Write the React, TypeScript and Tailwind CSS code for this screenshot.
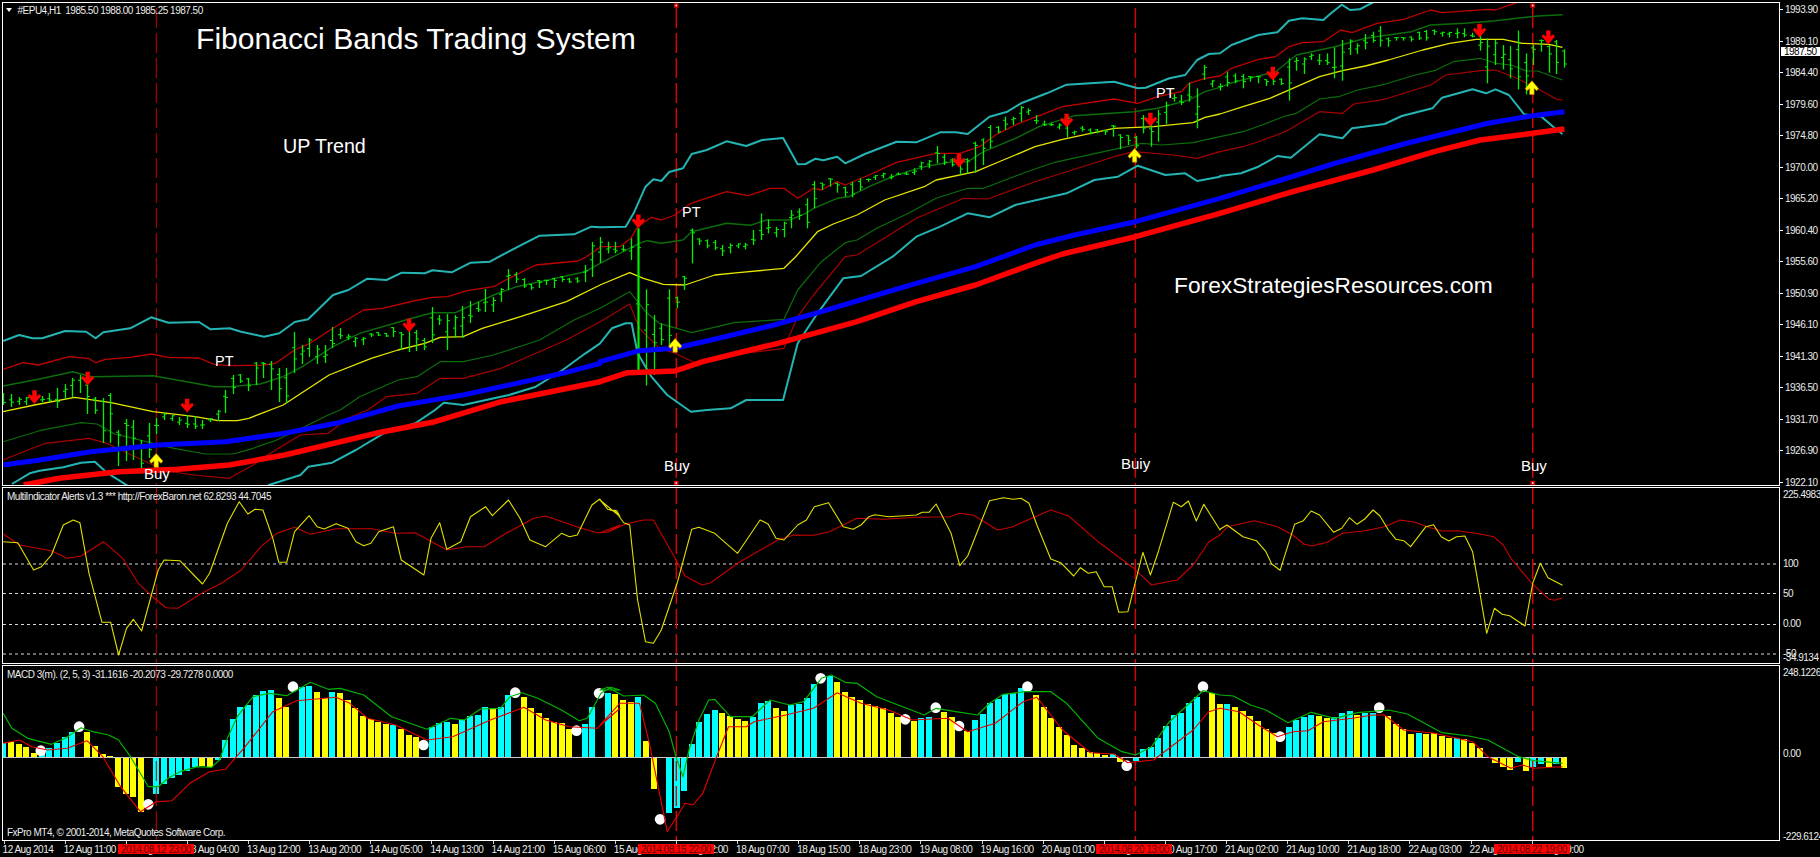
import React from "react";

// chart data was read off the screenshot in crops: each crop has its own scale
type Pt = [number, number];
type Map = (x: number, y: number) => Pt;

const t1: Map = (x, y) => [x / 2.613, y / 3];
const t2: Map = (x, y) => [600 + x / 2.529, y / 3];
const t3: Map = (x, y) => [1220 + x / 2.613, y / 3];
const b1: Map = (x, y) => [x / 2.529, 410 + y / 3];
const b2: Map = (x, y) => [600 + x / 2.529, 410 + y / 3];
const b3: Map = (x, y) => [1220 + x / 2.613, 410 + y / 3];

const pts = (s: string, m: Map) =>
  s.split(" ").map((p) => {
    const [x, y] = p.split(",").map(Number);
    return m(x, y);
  });
const line = (...parts: Pt[][]) =>
  parts
    .flat()
    .map(([x, y]) => `${x.toFixed(1)},${y.toFixed(1)}`)
    .join(" ");

const upperCyan = line(
  pts("8,1023 50,1005 85,1015 110,1015 170,993 225,995 250,1015 270,997 340,985 395,952 440,968 520,966 550,988 600,985 630,995 690,1010 730,1000 770,966 805,958 870,885 910,870 960,836 1010,840 1050,818 1110,820 1130,811 1180,817 1230,788 1280,785 1320,760 1410,707 1500,703 1545,680 1568,682", t1),
  pts("0,682 65,680 85,640 115,560 135,538 155,543 175,516 210,505 232,462 270,450 320,424 370,438 410,420 463,414 500,493 520,492 545,476 565,481 600,470 620,490 670,462 750,425 800,427 860,397 900,397 930,402 985,350 1030,335 1065,310 1130,280 1180,254 1300,245 1360,265 1380,263 1440,235 1480,225 1510,180 1540,162 1568,160", t2),
  pts("0,160 30,135 100,105 150,97 180,62 215,55 270,60 290,40 318,14 340,30 365,28 395,10 430,-10 900,-20", t3),
);
const upperRed = line(
  pts("8,1108 60,1088 100,1095 180,1070 230,1075 250,1088 275,1078 340,1072 395,1062 440,1072 520,1074 560,1093 600,1097 680,1096 720,1090 770,1050 810,1030 870,985 950,930 1000,925 1080,903 1130,892 1170,890 1220,872 1290,860 1330,835 1400,795 1510,783 1530,772 1568,742", t1),
  pts("0,740 50,740 78,715 95,680 130,652 155,660 190,645 230,610 320,575 375,587 430,565 465,565 500,595 540,565 560,570 600,545 620,555 680,525 750,487 850,460 910,460 960,440 1000,405 1060,370 1170,320 1300,297 1360,310 1410,290 1470,275 1490,250 1530,235 1568,228", t2),
  pts("0,228 30,205 100,178 145,170 180,140 215,128 270,125 315,90 345,98 410,70 480,58 550,30 580,38 700,28 720,30 770,10 800,-5 900,-15", t3),
);
const upperGreen = line(
  pts("8,1158 100,1138 190,1115 240,1130 400,1127 560,1160 600,1160 680,1152 740,1130 790,1100 870,1040 940,1000 1060,960 1130,938 1190,938 1290,885 1350,860 1530,815 1568,790", t1),
  pts("0,790 50,760 100,730 120,722 155,730 210,720 232,695 320,670 380,676 420,660 480,660 520,640 540,625 600,595 630,590 680,560 750,525 820,500 890,485 930,485 970,455 1060,410 1110,380 1200,347 1350,335 1410,325 1490,300 1530,275 1568,262", t2),
  pts("0,262 40,245 100,228 145,215 200,165 300,140 380,115 500,95 550,75 640,70 720,62 830,48 895,44", t3),
);
const midYellow = line(
  pts("8,1235 90,1215 195,1192 290,1208 400,1235 510,1250 570,1262 620,1262 650,1255 740,1215 860,1125 970,1075 1040,1050 1110,1030 1150,1012 1210,1010 1260,985 1360,950 1480,905 1568,855", t1),
  pts("0,855 75,818 110,835 160,853 215,855 290,825 350,818 465,805 495,770 550,695 590,672 650,645 720,600 820,560 850,540 950,515 1020,480 1100,440 1170,418 1300,385 1400,380 1500,368 1530,352 1568,342", t2),
  pts("0,342 60,320 130,295 190,265 260,230 320,212 380,198 440,180 530,150 600,130 670,118 740,118 790,130 860,133 895,142", t3),
);
const lowerGreen = line(
  pts("8,95 100,62 205,38 245,42 290,72 360,92 440,115 520,132 590,132 640,115 700,90 770,50 830,15 860,0", b1),
  pts("940,1190 1040,1140 1090,1130 1150,1085 1210,1085 1290,1065 1410,1020 1500,960 1568,925", t1),
  pts("0,925 75,875 115,935 150,970 232,998 340,968 465,958 500,870 560,785 620,728 650,720 700,685 780,640 850,595 930,565 970,565 1080,515 1150,487 1300,448 1370,430 1420,435 1500,428 1568,410", t2),
  pts("0,410 60,395 110,375 170,348 200,340 260,297 310,290 360,270 430,253 510,225 560,212 610,185 680,175 720,190 760,195 800,213 830,213 895,240", t3),
);
const lowerRed = line(
  pts("8,150 60,125 115,100 225,85 270,100 350,145 420,183 490,195 580,205 640,165 690,125 760,75 830,70 880,25 930,0", b1),
  pts("1010,1190 1090,1180 1150,1135 1210,1135 1310,1105 1480,1020 1568,965", t1),
  pts("0,965 75,912 100,985 150,1045 190,1060 240,1088 300,1070 400,1055 465,1045 500,950 540,885 620,770 650,765 800,655 920,595 980,597 1100,545 1300,470 1350,455 1450,465 1510,475 1568,455", t2),
  pts("0,455 60,440 100,425 170,395 260,335 320,340 350,312 430,298 550,255 590,225 680,212 720,210 770,232 820,260 880,298 895,300", t3),
);
const lowerCyan = line(
  pts("30,222 75,190 100,182 160,172 205,158 240,155 270,188 340,240 680,240 680,225 760,195 780,170 840,158 900,120 970,70 1050,40 1100,0", b1),
  pts("1160,1208 1210,1215 1330,1185 1400,1160 1470,1110 1530,1060 1568,1030", t1),
  pts("0,1030 30,985 65,970 80,970 95,1060 130,1130 170,1185 230,1235 270,1230 330,1225 370,1200 463,1200 500,1030 550,940 615,835 660,828 740,770 800,710 860,680 930,640 985,652 1050,615 1180,580 1250,540 1310,530 1360,497 1430,525 1480,520 1510,543 1568,530", t2),
  pts("0,528 55,520 100,500 150,468 185,473 260,403 320,415 345,385 430,372 475,348 555,325 580,293 660,268 695,280 720,268 755,285 795,343 840,350 875,385 895,402", t3),
);
const blueMa = line(
  pts("8,165 100,150 230,125 400,105 570,95 720,70 850,40", b1),
  pts("1040,1218 1210,1185 1470,1120 1568,1090", t1),
  pts("0,1085 100,1052 190,1045 300,1015 440,975 560,935 700,885 800,850 950,800 1100,735 1200,705 1354,665 1568,595", t2),
  pts("0,595 160,540 300,490 480,432 700,370 817,347 900,335", t3),
);
const redMa = line(
  pts("60,225 150,205 300,185 450,178 580,165 720,135 950,70 1100,35", b1),
  pts("1310,1205 1568,1145", t1),
  pts("0,1145 70,1118 190,1113 260,1085 450,1030 650,965 800,905 950,855 1100,790 1170,762 1354,710 1568,640", t2),
  pts("0,640 190,575 400,510 560,455 680,420 817,400 900,387", t3),
);

const oscYellow = line(
  pts("8,395 45,398 85,480 105,470 130,435 160,345 185,330 202,338 225,490 258,637 280,637 300,735 320,655 337,628 358,663 400,480 415,450 455,452 512,522 530,490 575,340 605,275 627,312 645,298 665,300 690,385 705,457 725,457 745,365 782,317 802,350 820,357 850,341 880,355 900,395 920,407 938,400 958,365 995,350 1015,450 1072,495 1090,385 1112,338 1130,418 1165,395 1190,320 1228,290 1245,317 1286,270 1315,325 1340,390 1380,410 1420,370 1440,380 1460,375 1497,285 1517,267 1537,298 1560,302 1568,320", b1),
  pts("0,270 20,298 40,305 60,338 75,345 95,570 115,695 135,700 155,660 195,520 232,358 250,352 290,370 348,430 405,330 425,342 445,385 465,390 500,345 522,330 542,290 578,278 615,350 640,358 660,345 680,320 695,314 730,320 800,315 815,307 832,307 850,282 888,370 910,467 930,438 985,272 1020,263 1045,268 1065,265 1085,280 1105,345 1140,447 1165,458 1198,498 1215,473 1235,490 1255,485 1275,530 1295,530 1312,607 1335,605 1373,427 1392,495 1412,425 1450,277 1470,290 1488,273 1508,333 1527,283 1568,360", b2),
  pts("0,358 18,345 60,380 95,392 120,425 135,462 157,481 195,343 218,332 238,303 260,315 297,367 318,355 338,323 358,343 378,327 400,300 418,318 440,360 460,388 480,392 498,410 538,350 558,344 578,380 598,393 618,380 640,378 660,425 680,555 697,670 717,595 737,613 757,617 797,648 817,520 837,460 857,503 895,526", b3),
);
const oscRed = line(
  pts("8,372 50,405 130,422 170,445 205,438 262,395 310,445 350,520 390,565 420,593 450,595 510,550 560,520 610,480 660,410 700,370 745,352 785,373 850,356 940,356 1000,370 1050,368 1130,420 1180,410 1225,410 1280,370 1350,325 1380,318 1470,355 1510,368 1535,367 1568,345", b1),
  pts("0,368 20,366 65,342 110,330 135,330 190,445 215,498 258,525 280,518 350,458 450,390 490,375 540,376 580,365 650,325 720,328 800,322 885,320 910,310 945,316 1005,360 1040,352 1140,300 1185,318 1260,395 1350,475 1395,525 1430,517 1460,510 1500,465 1540,395 1568,375", b2),
  pts("0,375 20,350 90,332 150,350 190,375 220,403 240,408 280,397 320,370 380,362 430,350 470,330 510,337 545,352 580,363 620,362 680,372 715,380 740,405 760,445 815,520 860,568 875,571 895,563", b3),
);

const macdGreen = line(
  pts("8,910 30,955 70,985 130,1003 165,985 205,953 235,965 275,975 300,990 330,1040 355,1090 375,1130 400,1130 425,1105 455,1085 500,1070 535,1072 555,1050 575,985 600,920 640,860 680,850 725,857 785,817 830,838 860,835 920,855 990,920 1080,958 1140,925 1175,930 1215,897 1265,895 1290,860 1320,848 1360,865 1420,900 1465,932 1485,925 1520,850 1545,832 1568,840", b1),
  pts("0,840 20,832 60,858 110,855 140,880 175,965 192,1040 210,1100 225,1020 250,930 275,870 290,868 330,920 385,920 430,870 480,885 515,875 560,805 585,795 620,817 650,820 700,860 820,915 850,895 900,905 955,915 985,880 1020,853 1075,845 1140,845 1180,880 1260,985 1320,1025 1354,1035 1395,1010 1440,935 1500,870 1525,842 1568,855", b2),
  pts("0,855 35,858 80,885 120,900 178,938 238,907 300,925 360,908 440,900 490,912 580,968 650,978 700,990 780,1040 820,1052 895,1060", b3),
);
const macdRed = line(
  pts("8,1000 50,990 80,1010 120,1020 170,1015 220,992 260,1040 305,1130 355,1205 395,1175 435,1172 480,1120 530,1085 570,1078 620,1010 690,905 750,872 850,862 885,880 930,925 1000,945 1080,990 1145,980 1240,930 1325,892 1380,930 1440,950 1510,955 1568,895", b1),
  pts("0,945 50,880 100,880 125,1000 170,1265 200,1210 215,1180 235,1185 260,1150 295,1040 325,950 370,950 390,935 470,915 540,895 600,848 660,880 730,900 790,930 880,925 930,965 1000,940 1070,875 1105,862 1170,960 1240,1028 1300,1032 1335,1058 1400,1050 1500,960 1540,905 1568,895", b2),
  pts("0,895 50,905 100,945 150,980 190,965 230,962 270,935 345,925 400,915 430,915 480,960 560,970 660,995 700,1040 760,1075 790,1065 820,1075 895,1070", b3),
);

// high/low of each candle bar, in page pixels up to bar 78, then crop units
const barsA = "393,405 394,407 397,405 397,405 391,403 396,402 393,402 388,408 384,399 378,397 375,393 378,414 397,414 398,443 393,443 430,466 419,461 420,460 440,471 423,458 418,434 413,420 415,421 417,425 415,428 416,429 420,429 418,422 410,421 390,413 375,394 374,383 378,391 362,385 362,378 361,390 368,402 368,403 332,373 345,364 338,357 345,364 345,363 327,348 328,339 334,340 337,347 337,345 333,337 332,336 333,337 327,337 332,350 320,352 330,351 338,350 307,343 315,325 314,350 315,338 306,338 301,323 302,312 289,312 297,312 288,302 269,290 272,283 278,288 284,290 280,288 280,285 278,288 276,282 278,283 277,283 265,282 242,277 237,263";
const barsB = "725,760 725,760 735,755 715,780 685,1125 868,1157 945,1125 970,1035 868,1050 890,925 828,870 685,790 715,735 718,745 720,750 735,768 730,760 730,745 728,748 690,735 640,720 658,700 680,712 665,712 630,685 625,660 595,685 543,625 548,570 535,560 548,578 560,590 545,592 535,572 535,545 525,540 518,535 522,538 517,525 515,525 505,525 485,510 480,505 438,490 462,495 475,500 490,525 475,520 425,518 415,495 375,445 378,400 350,390 350,375 318,365 325,345 345,372 362,378 368,378 370,388 350,412 392,405 378,395 385,403 387,400 390,405 375,410 403,448 405,435 408,445 345,400 365,440 330,425 305,372 282,305 285,315 248,305 265,385 195,240 240,262 250,272 215,260 220,250 222,265 228,245 228,250 238,258 220,255 235,255 175,302 172,212 172,222 160,180 162,195 160,195 142,235 120,242 118,165 130,162 102,148 95,128 78,140 112,140 112,122 112,122 110,125 95,120 90,122 88,105 95,110 95,112 85,115 85,112 98,112 105,152 115,250 120,195 135,208 138,235 92,268 160,283 135,195 118,155 135,218 120,222 148,203";

const parsePairs = (s: string, k: number) => s.split(" ").map((p) => p.split(",").map((n) => Number(n) / k));
const bars = [...parsePairs(barsA, 1), ...parsePairs(barsB, 3)];
const barX = (i: number) => 3.3 + 7.65 * i;

const histogram = "c1000 y997 y1002 y1010 y1030 c1020 c1014 c1000 c982 c965 - y965 y1008 y1033 y1037 y1130 y1152 y1160 y1205 - c1152 c1122 c1105 c1095 c1083 c1070 y1068 y1072 c1050 c990 c928 c890 c885 c855 c843 c840 y865 y892 - c832 c828 y845 y865 c845 y848 y870 y895 y918 y928 y935 y942 c945 y958 y975 y982 - c952 c940 c935 y942 c930 c917 c915 c890 y898 c892 c855 - y862 y895 y910 y925 y935 y940 y958 - c942 c890 - c848 y852 y870 y875 c862 y993 y1137 - c1208 c1193 c1142 c1002 c937 c912 c900 y910 y918 y928 y933 c920 c880 c873 y895 y903 c885 c883 c865 c822 - c798 y815 y845 y862 y870 y882 y887 y893 y908 y920 - y932 c925 c920 - y905 y922 - y962 c930 c913 c880 c868 c852 c848 c833 - y855 y890 y925 y950 y975 y1005 y1013 y1025 y1030 y1035 c1032 y1055 - c1053 c1018 c1010 c985 c948 c915 c910 c880 c862 - y850 y882 c882 y890 y903 y918 y933 y957 y970 - c950 c930 c922 c915 y918 y925 c920 c908 c903 y915 c908 c908 - y917 y942 y957 y972 c968 y973 y970 y978 y985 c983 y988 y998 y1013 - y1058 y1070 y1080 c1055 y1083 c1072 c1062 y1070 c1062 y1073".split(" ");

const downArrows = [...pts("90,1192 229,1137 489,1218 1069,977", t1), ...pts("97,665 908,483 1180,363 1392,360", t2), ...pts("138,222 678,93 858,113", t3)];
const upArrows = [...pts("395,150", b1), ...pts("190,1035 1352,465", t2), ...pts("815,262", t3)];
const dots = [
  ...pts("103,1022 200,950 375,1183 741,830 1071,1005 1303,848 1458,962 1515,850", b1),
  ...pts("152,1228 558,805 772,928 849,893 908,948 1081,830 1332,1067 1525,830", b2),
  ...pts("157,980 416,893", b3),
];

const buyLines = [156.3, 676.3, 1135.4, 1532.7];
const prices = ["1993.90", "1989.10", "1984.40", "1979.60", "1974.80", "1970.00", "1965.20", "1960.40", "1955.60", "1950.90", "1946.10", "1941.30", "1936.50", "1931.70", "1926.90", "1922.10"];
const dates = ["12 Aug 2014", "12 Aug 11:00", "12 Aug 19:00", "13 Aug 04:00", "13 Aug 12:00", "13 Aug 20:00", "14 Aug 05:00", "14 Aug 13:00", "14 Aug 21:00", "15 Aug 06:00", "15 Aug 14:00", "15 Aug 22:00", "18 Aug 07:00", "18 Aug 15:00", "18 Aug 23:00", "19 Aug 08:00", "19 Aug 16:00", "20 Aug 01:00", "20 Aug 09:00", "20 Aug 17:00", "21 Aug 02:00", "21 Aug 10:00", "21 Aug 18:00", "22 Aug 03:00", "22 Aug 11:00", "22 Aug 19:00"];

const BuyLines = ({ top, bottom }: { top: number; bottom: number }) => (
  <>
    {buyLines.map((x, i) => (
      <line key={x} x1={x} x2={x} y1={top} y2={bottom} stroke={i === 0 ? "#c80000" : "#e00000"} strokeWidth={i === 0 ? 1 : 1.4} strokeDasharray="20 5" />
    ))}
  </>
);

const Poly = ({ points, color, width = 1 }: { points: string; color: string; width?: number }) => (
  <polyline points={points} fill="none" stroke={color} strokeWidth={width} strokeLinejoin="round" />
);

const Marker = ({ x, y }: { x: number; y: number }) => (
  <rect x={x - 1.5} y={y - 1.5} width={3} height={3} fill="#fff" stroke="#e00000" strokeWidth={1.5} />
);

const PriceChart = () => (
  <svg viewBox="3 3 1776 482" className="block h-[482px] w-[1776px]">
    <BuyLines top={8} bottom={485} />
    <Poly points={upperCyan} color="#25b4b4" width={2} />
    <Poly points={lowerCyan} color="#25b4b4" width={2} />
    <Poly points={upperRed} color="#c00000" width={1.3} />
    <Poly points={lowerRed} color="#a80000" width={1.2} />
    <Poly points={upperGreen} color="#0b6e0b" width={1.4} />
    <Poly points={lowerGreen} color="#0b6e0b" width={1.2} />
    <Poly points={midYellow} color="#e6e600" width={1.3} />
    {bars.map(([hi, lo], i) => {
      const x = Math.round(barX(i)) + 0.5;
      const open = hi + (lo - hi) * (0.35 + 0.3 * Math.sin(i * 12.9));
      const close = hi + (lo - hi) * (0.45 + 0.35 * Math.cos(i * 7.3));
      return (
        <g key={i} stroke="#00f000">
          <line x1={x} x2={x} y1={hi} y2={lo} strokeWidth={i === 83 ? 2.2 : 1.3} />
          <line x1={x - 2.5} x2={x} y1={open} y2={open} strokeWidth={1} />
          <line x1={x} x2={x + 2.5} y1={close} y2={close} strokeWidth={1} />
        </g>
      );
    })}
    <Poly points={blueMa} color="#0000ff" width={5} />
    <Poly points={redMa} color="#ff0000" width={5.5} />
    {downArrows.map(([x, y]) => (
      <path key={`${x}`} transform={`translate(${x} ${y}) scale(1.1)`} d="M-2,-6.5 H2 V-1 L4.5,-3 L6,-1 L0,6 L-6,-1 L-4.5,-3 L-2,-1 Z" fill="#ff0000" />
    ))}
    {upArrows.map(([x, y]) => (
      <path key={`${x}`} transform={`translate(${x} ${y}) scale(1.1)`} d="M-2,6.5 H2 V1 L4.5,3 L6,1 L0,-6 L-6,1 L-4.5,3 L-2,1 Z" fill="#ffff00" stroke="#d08000" strokeWidth={0.6} />
    ))}
    <Marker x={676.3} y={5.5} />
    <Marker x={1532.7} y={5.5} />
    <Marker x={676.3} y={483} />
    <Marker x={1532.7} y={483} />
  </svg>
);

const OscChart = () => (
  <svg viewBox="3 488 1776 175" className="block h-[175px] w-[1776px]">
    {[564, 593.5, 624.5, 654].map((y) => (
      <line key={y} x1={3} x2={1779} y1={y} y2={y} stroke="#d8d8d8" strokeDasharray="3 3" />
    ))}
    <BuyLines top={484} bottom={663} />
    <Poly points={oscRed} color="#c80000" width={1.1} />
    <Poly points={oscYellow} color="#e0e000" width={1.1} />
  </svg>
);

const MacdChart = () => (
  <svg viewBox="3 666 1776 174" className="block h-[174px] w-[1776px]">
    {histogram.map((h, i) => {
      if (h === "-") return null;
      const y = 410 + Number(h.slice(1)) / 3;
      const x = Math.round(barX(i)) - 3;
      return <rect key={i} x={x} y={Math.min(y, 757)} width={6} height={Math.abs(y - 757)} fill={h[0] === "c" ? "#00ffff" : "#ffff00"} shapeRendering="crispEdges" />;
    })}
    <line x1={3} x2={1564} y1={757.5} y2={757.5} stroke="#c8c8c8" />
    {dots.map(([x, y]) => (
      <circle key={`${x}`} cx={x} cy={y} r={5.3} fill="#fff" />
    ))}
    <BuyLines top={661} bottom={840} />
    <Poly points={macdGreen} color="#00b400" width={1.2} />
    <Poly points={macdRed} color="#e80000" width={1.1} />
  </svg>
);

const small = "font-['Liberation_Sans',sans-serif] text-[10px] tracking-[-0.5px] leading-[9px] whitespace-nowrap";
const mt4 = `${small} text-[#ececec]`;

const App = () => {
  return (
    <div className="relative flex h-[857px] w-[1820px] flex-col gap-px overflow-hidden bg-black pl-[2px] pt-[2px] font-['Liberation_Sans',sans-serif] text-white">
      {/* price panel */}
      <div className="flex h-[484px]">
        <div className="relative w-[1778px] shrink-0 border-x border-y border-white">
          <PriceChart />
          <div className={`${mt4} absolute left-[3px] top-[2.5px] flex items-center gap-[5.5px]`}>
            <span className="h-0 w-0 border-x-[3px] border-t-[4px] border-x-transparent border-t-white" />
            <span>#EPU4,H1&nbsp; 1985.50 1988.00 1985.25 1987.50</span>
          </div>
          <span className="absolute left-[193px] top-[21px] text-[30.1px] leading-none">Fibonacci Bands Trading System</span>
          <span className="absolute left-[280px] top-[134px] text-[19.7px] leading-none">UP Trend</span>
          <span className="absolute left-[1171px] top-[271px] text-[22.75px] leading-none">ForexStrategiesResources.com</span>
          <span className="absolute left-[212px] top-[351px] text-[14.5px] leading-none">PT</span>
          <span className="absolute left-[679px] top-[202px] text-[14.5px] leading-none">PT</span>
          <span className="absolute left-[1153px] top-[83px] text-[14.5px] leading-none">PT</span>
          <span className="absolute left-[141px] top-[463px] text-[15px] leading-none">Buy</span>
          <span className="absolute left-[661px] top-[455px] text-[15px] leading-none">Buy</span>
          <span className="absolute left-[1118px] top-[453px] text-[15px] leading-none">Buiy</span>
          <span className="absolute left-[1518px] top-[455px] text-[15px] leading-none">Buy</span>
        </div>
        <div className="relative flex-1">
          <div className="mt-[3px] flex h-[481.5px] flex-col justify-between">
            {prices.map((p) => (
              <div key={p} className="flex items-center gap-[2px]">
                <span className="h-px w-[3px] bg-white" />
                <span className={mt4}>{p}</span>
              </div>
            ))}
          </div>
          <span className={`${small} absolute left-px top-[45px] bg-white px-[3px] text-black`}>1987.50</span>
        </div>
      </div>

      {/* oscillator panel */}
      <div className="flex h-[177px]">
        <div className="relative w-[1778px] shrink-0 border-x border-y border-white">
          <OscChart />
          <span className={`${mt4} absolute left-[4px] top-[4px]`}>MultiIndicator Alerts v1.3 *** http://ForexBaron.net 62.8293 44.7045</span>
        </div>
        <div className={`${mt4} flex flex-col pl-[3px] pt-[2.5px]`}>
          <span className="h-[69.5px]">225.4983</span>
          <span className="h-[29.5px]">100</span>
          <span className="h-[30.5px]">50</span>
          <span className="h-[30px]">0.00</span>
          <span className="h-[3.5px]">-50</span>
          <span>-34.9134</span>
        </div>
      </div>

      {/* macd panel */}
      <div className="flex h-[176px]">
        <div className="relative w-[1778px] shrink-0 border-x border-y border-white">
          <MacdChart />
          <span className={`${mt4} absolute left-[4px] top-[3.5px]`}>MACD 3(m). (2, 5, 3) -31.1616 -20.2073 -29.7278 0.0000</span>
          <span className={`${mt4} absolute left-[4px] top-[162px]`}>FxPro MT4, © 2001-2014, MetaQuotes Software Corp.</span>
        </div>
        <div className={`${mt4} flex flex-col pl-[3px] pt-[3px]`}>
          <span className="h-[84px]">248.1226</span>
          <span className="h-[86px]">0.00</span>
          <span>-229.6124</span>
        </div>
      </div>

      {/* time axis */}
      <div className="relative -mt-px flex pl-[1.6px]">
        {dates.map((d) => (
          <div key={d} className="flex w-[61.14px] shrink-0 flex-col">
            <span className="h-[3px] w-px bg-[#d0d0d0]" />
            <span className={`${mt4} -ml-px mt-[1px]`}>{d}</span>
          </div>
        ))}
        {[
          ["2014.08.12 23:00", "left-[116px]"],
          ["2014.08.15 22:00", "left-[636px]"],
          ["2014.08.20 13:00", "left-[1094px]"],
          ["2014.08.22 19:00", "left-[1492px]"],
        ].map(([label, left]) => (
          <span key={label} className={`${small} absolute ${left} top-[3px] flex h-[10px] w-[76px] items-center justify-center bg-[#ff0000] text-[#600000]`}>
            {label}
          </span>
        ))}
      </div>
    </div>
  );
};

export default App;
